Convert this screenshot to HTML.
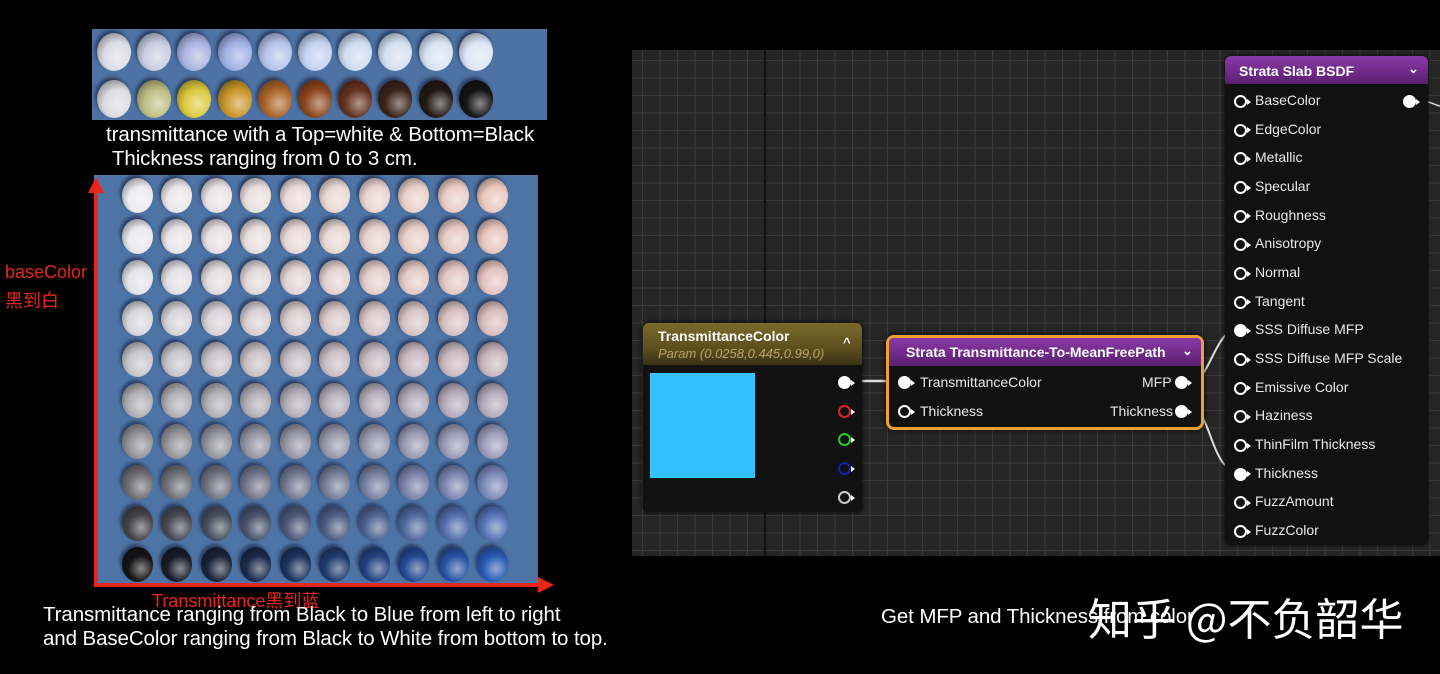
<!DOCTYPE html>
<html><head><meta charset="utf-8"><style>
body{margin:0;width:1440px;height:674px;background:#000;position:relative;overflow:hidden;font-family:"Liberation Sans","Noto Sans CJK SC",sans-serif;}
.a{position:absolute;}
.t{color:#fff;font-size:20.5px;white-space:nowrap;letter-spacing:-0.1px;}
.red{color:#e8261c;}
.sph{position:absolute;border-radius:50%;}
#graph{left:632px;top:50px;width:808px;height:506px;background-color:#252525;
background-image:linear-gradient(90deg,transparent 132px,#111 132px,#111 134px,transparent 134px),linear-gradient(90deg,#3a3a3a 1.2px,transparent 1.2px),linear-gradient(#3a3a3a 1.2px,transparent 1.2px);
background-size:808px 506px,17.5px 17.5px,17.5px 17.5px;background-position:0 0,10px 0,0 10px;background-repeat:no-repeat,repeat,repeat;}
.node{position:absolute;background:#111;border-radius:6px;box-shadow:0 0 4px #000;}
.hdr{color:#fff;font-weight:bold;font-size:14px;padding-left:12px;}
.row{position:absolute;color:#e8e8e8;font-size:14px;white-space:nowrap;}
.pin{position:absolute;width:9px;height:9px;border:2.5px solid #fff;border-radius:50%;box-sizing:content-box;}
.pin.f{background:#fff;}
.pin:after{content:"";position:absolute;right:-6px;top:1.5px;border-left:4px solid #fff;border-top:3px solid transparent;border-bottom:3px solid transparent;}
.chev{position:absolute;color:#fff;font-size:13px;font-weight:bold;}
</style></head><body>
<div class="a" id="topp" style="left:92px;top:29px;width:455px;height:91px;background:#4d72a3;"></div>
<div class="a" id="main" style="left:94px;top:175px;width:444px;height:411px;background:#4e74a6;"></div>
<div id="spheres"></div>
<div class="a t" style="left:106px;top:123px;">transmittance with a Top=white &amp; Bottom=Black</div>
<div class="a t" style="left:112px;top:147px;">Thickness ranging from 0 to 3 cm.</div>
<div class="a" style="left:94px;top:190px;width:4px;height:396px;background:#e8261c;"></div>
<div class="a" style="left:88px;top:177px;border-left:8px solid transparent;border-right:8px solid transparent;border-bottom:16px solid #e8261c;"></div>
<div class="a" style="left:94px;top:583px;width:446px;height:4px;background:#e8261c;"></div>
<div class="a" style="left:538px;top:577px;border-top:8px solid transparent;border-bottom:8px solid transparent;border-left:16px solid #e8261c;"></div>
<div class="a red" style="left:5px;top:262px;font-size:18px;">baseColor</div>
<div class="a red" style="left:5px;top:287px;font-size:18px;">黑到白</div>
<div class="a red" style="left:152px;top:587px;font-size:18px;">Transmittance黑到蓝</div>
<div class="a t" style="left:43px;top:603px;">Transmittance ranging from Black to Blue from left to right</div>
<div class="a t" style="left:43px;top:627px;">and BaseColor ranging from Black to White from bottom to top.</div>

<div class="a" id="graph"></div>
<svg class="a" style="left:0;top:0" width="1440" height="674">
<path d="M852 381 H905" stroke="#ddd" stroke-width="2.5" fill="none"/>
<path d="M1192 381 C1210 381 1215 328 1240 328" stroke="#ddd" stroke-width="2" fill="none"/>
<path d="M1192 410 C1212 410 1210 472 1240 472" stroke="#ddd" stroke-width="2" fill="none"/>
<path d="M1415 100 C1428 100 1432 104 1440 106" stroke="#ddd" stroke-width="1.5" fill="none"/>
</svg>

<div class="node" style="left:643px;top:323px;width:219px;height:189px;">
 <div style="height:42px;border-radius:6px 6px 0 0;background:linear-gradient(#7a6a2a,#5c4f1e 60%,#3a3214);"></div>
 <div class="a hdr" style="left:3px;top:5px;">TransmittanceColor</div>
 <div class="a" style="left:15px;top:23px;color:#b9a56a;font-size:13px;font-style:italic;">Param (0.0258,0.445,0.99,0)</div>
 <div class="chev" style="left:200px;top:12px;">^</div>
 <div class="a" style="left:7px;top:50px;width:105px;height:105px;background:#35c1fb;"></div>
</div>
<div class="pin f" style="left:838px;top:376px;"></div>
<div class="pin" style="left:838px;top:405px;border-color:#d22;"></div>
<div class="pin" style="left:838px;top:433px;border-color:#2c2;"></div>
<div class="pin" style="left:838px;top:462px;border-color:#12a;"></div>
<div class="pin" style="left:838px;top:491px;border-color:#ccc;"></div>

<div class="node" style="left:886px;top:335px;width:318px;height:95px;border:3px solid #f0a030;box-sizing:border-box;border-radius:8px;">
 <div style="height:28px;border-radius:4px 4px 0 0;background:linear-gradient(#8a3aa8,#5a1f70);"></div>
 <div class="a hdr" style="left:5px;top:6px;">Strata Transmittance-To-MeanFreePath</div>
 <div class="chev" style="left:293px;top:5px;">⌄</div>
</div>
<div class="pin f" style="left:898px;top:376px;"></div>
<div class="row" style="left:920px;top:374px;">TransmittanceColor</div>
<div class="pin" style="left:898px;top:405px;"></div>
<div class="row" style="left:920px;top:403px;">Thickness</div>
<div class="row" style="left:1142px;top:374px;">MFP</div>
<div class="pin f" style="left:1175px;top:376px;"></div>
<div class="row" style="left:1110px;top:403px;">Thickness</div>
<div class="pin f" style="left:1175px;top:405px;"></div>

<div class="node" style="left:1225px;top:56px;width:203px;height:489px;">
 <div style="height:28px;border-radius:6px 6px 0 0;background:linear-gradient(#8a3aa8,#5a1f70);"></div>
 <div class="a hdr" style="left:2px;top:7px;">Strata Slab BSDF</div>
 <div class="chev" style="left:183px;top:5px;">⌄</div>
</div>
<div class="pin f" style="left:1403px;top:95px;"></div>
<div id="slab"></div>

<div class="a t" style="left:881px;top:605px;">Get MFP and Thickness from color</div>
<div class="a" style="left:1088px;top:584px;color:#fff;font-size:44px;font-family:'Noto Sans CJK SC',sans-serif;white-space:nowrap;">知乎 @不负韶华</div>

<script>
(function(){
var names=["BaseColor","EdgeColor","Metallic","Specular","Roughness","Anisotropy","Normal","Tangent","SSS Diffuse MFP","SSS Diffuse MFP Scale","Emissive Color","Haziness","ThinFilm Thickness","Thickness","FuzzAmount","FuzzColor"];
var h="";
names.forEach(function(n,i){var y=100+i*28.67;var f=(i==8||i==13)?" f":"";
h+='<div class="pin'+f+'" style="left:1234px;top:'+(y-5)+'px"></div><div class="row" style="left:1255px;top:'+(y-8)+'px">'+n+'</div>';});
document.getElementById("slab").innerHTML=h;
function lerp(a,b,t){return a.map(function(v,i){return Math.round(v+(b[i]-v)*t)});}
function sph(x,y,d,c){var hi=lerp(c,[255,255,255],0.5),dk=lerp(c,[0,0,0],0.55);
return '<div class="sph" style="left:'+(x-d/2)+'px;top:'+(y-d/2-2)+'px;width:'+d+'px;height:'+(d+4)+'px;background:radial-gradient(circle at 62% 62%,rgb('+hi.join(',')+') 0%,rgb('+c.join(',')+') 45%,rgb('+dk.join(',')+') 100%);box-shadow:-2px -3px 3px rgba(20,30,60,.6)"></div>';}
var s="";
for(var r=0;r<10;r++)for(var c=0;c<10;c++){
 var tr=c/9,bc=r/9;
 var tc=lerp([235,235,240],[235,200,190],tr),bt=lerp([20,20,22],[40,90,180],tr);
 var col=lerp(tc,bt,Math.pow(bc,2.2));
 s+=sph(137+c*39.5,195+r*41,31,col);}
var r1=[[220,220,230],[200,205,225],[170,180,225],[160,175,230],[180,195,235],[195,210,240],[205,220,240],[210,225,240],[215,228,242],[220,230,245]];
var r2=[[220,220,225],[190,190,130],[220,200,60],[200,150,40],[170,100,40],[140,70,30],[100,50,30],[60,35,25],[35,25,20],[20,20,20]];
for(var k=0;k<10;k++){s+=sph(114+k*40.2,52,34,r1[k]);s+=sph(114+k*40.2,99,34,r2[k]);}
document.getElementById("spheres").innerHTML=s;
})();
</script>
</body></html>
